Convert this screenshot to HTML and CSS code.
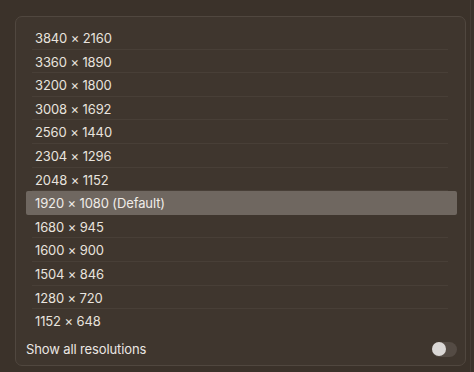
FILE: index.html
```html
<!DOCTYPE html>
<html>
<head>
<meta charset="utf-8">
<link rel="stylesheet" href="styles.css">
</head>
<body>
<div class="window">
  <div class="panel">
    <ul class="list">
      <li class="row">3840 × 2160</li>
      <li class="row">3360 × 1890</li>
      <li class="row">3200 × 1800</li>
      <li class="row">3008 × 1692</li>
      <li class="row">2560 × 1440</li>
      <li class="row">2304 × 1296</li>
      <li class="row">2048 × 1152</li>
      <li class="row selected">1920 × 1080 (Default)</li>
      <li class="row">1680 × 945</li>
      <li class="row">1600 × 900</li>
      <li class="row">1504 × 846</li>
      <li class="row">1280 × 720</li>
      <li class="row last">1152 × 648</li>
    </ul>
    <div class="footer">
      <span class="label">Show all resolutions</span>
      <span class="toggle"><span class="knob"></span></span>
    </div>
  </div>
</div>
</body>
</html>
```

FILE: styles.css
```css
html, body {
  margin: 0;
  padding: 0;
  background: #3b322a;
}
body {
  width: 474px;
  height: 372px;
  overflow: hidden;
  font-family: Inter, "Noto Sans", sans-serif;
  font-size: 13px;
  letter-spacing: -0.12px;
  color: #e8e3de;
}
.window {
  box-sizing: border-box;
  width: 471px;
  height: 372px;
  padding: 16px 4px 6px 15px;
  border-right: 1px solid #463d35;
}
.panel {
  box-sizing: border-box;
  height: 350px;
  background: #3f362e;
  border: 1px solid #50473f;
  border-radius: 7px;
  padding: 9px 8px 0 10px;
  display: flex;
  flex-direction: column;
}
.list {
  list-style: none;
  margin: 0;
  padding: 0;
}
.row {
  position: relative;
  box-sizing: border-box;
  height: 23.6px;
  line-height: 22.6px;
  padding-top: 1px;
  padding-left: 9px;
  border-radius: 2px;
}
.row::after {
  content: "";
  position: absolute;
  left: 6px;
  right: 9px;
  bottom: 0;
  height: 1px;
  background: #483f37;
}
.row.last::after,
.row.selected::after {
  display: none;
}
.row.selected {
  background: #6f6760;
  color: #f0ece8;
}
.footer {
  display: flex;
  align-items: center;
  justify-content: space-between;
  height: 32px;
}
.label {
  color: #ebe7e3;
  padding-top: 1px;
}
.toggle {
  display: inline-flex;
  align-items: center;
  width: 25px;
  height: 15px;
  border-radius: 8px;
  background: #544b44;
  margin-top: 1px;
}
.knob {
  width: 14px;
  height: 14px;
  border-radius: 50%;
  background: #dad7d5;
}
```
